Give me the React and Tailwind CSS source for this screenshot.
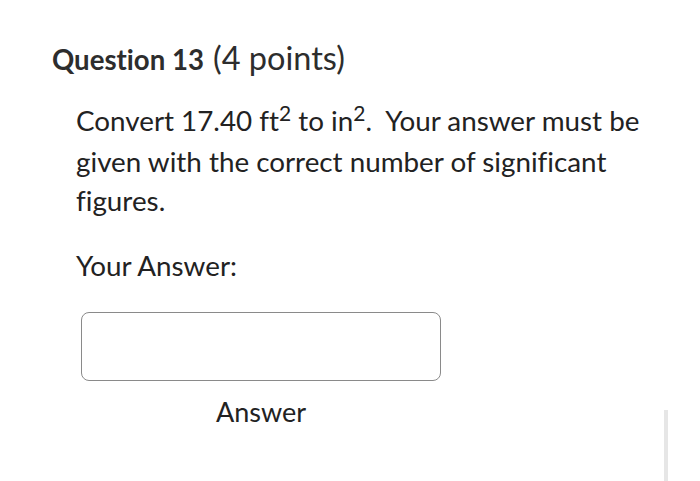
export default function App() {
  return (
    <div className="relative w-[700px] h-[481px] bg-white overflow-hidden text-[#222] [font-variant-ligatures:none]" style={{ fontFamily: 'Lato, "Open Sans", sans-serif' }}>
      <div className="flex flex-col pt-[38px]">
        <h2 className="flex items-baseline gap-[9px] pl-[52px] leading-[40px] text-[#2d2d2d]">
          <span className="text-[27.6px] font-bold">Question 13</span>
          <span className="text-[32.5px]">(4 points)</span>
        </h2>
        <div className="flex flex-col gap-[26px] pl-[76px] pr-[30px] pt-[21px] text-[27.8px] leading-[39px]">
          <p>
            Convert 17.40 ft<span className="relative -top-[10px] text-[21px]">2</span> to in<span className="relative -top-[10px] text-[21px]">2</span>.&nbsp; Your answer must be given with the correct number of significant figures.
          </p>
          <p>Your Answer:</p>
        </div>
        <div className="flex flex-col items-center w-[360px] ml-[81px] mt-[27px] gap-[15px]">
          <div className="w-full h-[69px] rounded-[8px] border-[1.5px] border-[#8a8a8a]" />
          <div className="text-[27px] leading-[32px]">Answer</div>
        </div>
      </div>
      <div className="absolute left-[664px] top-[410px] w-[4px] h-[80px] bg-[#e6e6e6]" />
    </div>
  );
}
